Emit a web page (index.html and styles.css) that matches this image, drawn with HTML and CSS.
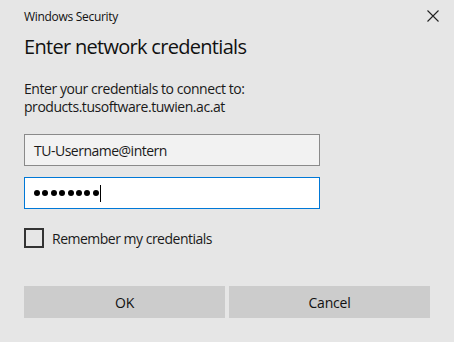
FILE: index.html
```html
<!DOCTYPE html>
<html>
<head>
<meta charset="utf-8">
<link rel="stylesheet" href="styles.css">
</head>
<body>
<div class="dialog">
  <div class="titlebar">
    <span class="app">Windows Security</span>
    <span class="close"><svg width="12" height="12" viewBox="0 0 12 12"><path d="M0.5 0.5 L11.5 11.5 M11.5 0.5 L0.5 11.5" stroke="#222" stroke-width="1.1" fill="none"/></svg></span>
  </div>
  <h1 class="heading">Enter network credentials</h1>
  <p class="message">Enter your credentials to connect to:<br>products.tusoftware.tuwien.ac.at</p>
  <div class="fields">
    <div class="field user">TU-Username@intern</div>
    <div class="field pass"><span class="dots"><i></i><i></i><i></i><i></i><i></i><i></i><i></i><i></i></span><span class="caret"></span></div>
  </div>
  <label class="remember"><span class="box"></span><span>Remember my credentials</span></label>
  <div class="buttons">
    <div class="btn">OK</div>
    <div class="btn">Cancel</div>
  </div>
</div>
</body>
</html>
```
FILE: styles.css
```css
html, body {
  margin: 0;
  padding: 0;
  background: #e6e6e6;
}
body {
  width: 454px;
  height: 342px;
  overflow: hidden;
  font-family: "Open Sans", "Noto Sans", sans-serif;
  color: #1a1a1a;
}
.dialog {
  padding: 0 24px;
}
.titlebar {
  display: flex;
  justify-content: space-between;
  align-items: center;
  height: 32px;
}
.app {
  font-size: 12px;
  letter-spacing: -0.3px;
  color: #111;
}
.close {
  display: flex;
  margin-right: -9px;
}
.heading {
  margin: 0;
  font-size: 20px;
  font-weight: 400;
  line-height: 28px;
  letter-spacing: -0.7px;
  color: #111;
  position: relative;
  top: 1px;
}
.message {
  margin: 20px 0 0;
  font-size: 14px;
  line-height: 18px;
  letter-spacing: -0.45px;
}
.fields {
  margin-top: 18px;
  display: flex;
  flex-direction: column;
  gap: 11px;
}
.field {
  box-sizing: border-box;
  width: 296px;
  height: 32px;
  display: flex;
  align-items: center;
  padding-left: 9px;
  font-size: 14px;
  letter-spacing: -0.5px;
}
.user {
  background: #f2f2f2;
  border: 1px solid #8a8a8a;
}
.pass {
  background: #fff;
  border: 1px solid #0078d7;
}
.dots {
  display: flex;
  gap: 2.4px;
}
.dots i {
  width: 6px;
  height: 6px;
  border-radius: 50%;
  background: #000;
}
.caret {
  width: 1px;
  height: 17px;
  background: #000;
  margin-left: 1px;
}
.remember {
  margin-top: 19px;
  display: flex;
  align-items: center;
  gap: 8px;
  font-size: 14px;
  letter-spacing: -0.5px;
}
.box {
  box-sizing: border-box;
  width: 20px;
  height: 20px;
  border: 2px solid #333;
}
.buttons {
  margin-top: 38px;
  display: flex;
  gap: 4px;
}
.btn {
  flex: 1;
  height: 32px;
  background: #cccccc;
  display: flex;
  align-items: center;
  justify-content: center;
  font-size: 14px;
  letter-spacing: -0.2px;
  color: #111;
}
```
